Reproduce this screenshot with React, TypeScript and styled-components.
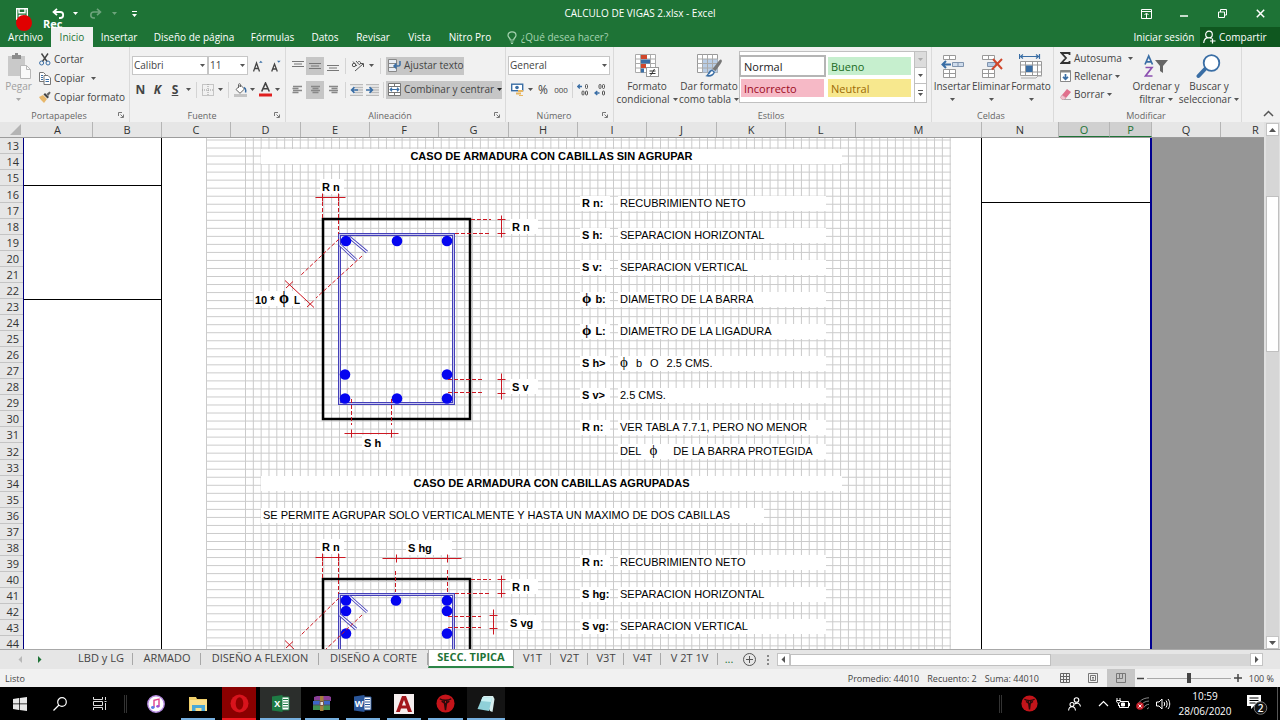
import React from 'react';
import styled, { createGlobalStyle, css } from 'styled-components';

const GREEN = '#1e7336';
const BLUE = '#3a6ea5';
const INK = '#444444';

const GlobalStyle = createGlobalStyle`
  * { box-sizing: border-box; }
  body { margin: 0; background: #000; }
  button, select, input { font: inherit; color: inherit; margin: 0; }
  button { padding: 0; border: 0; background: none; cursor: pointer; }
  svg { display: block; flex: none; }
`;

const Window = styled.div`
  display: flex;
  flex-direction: column;
  height: 100vh;
  overflow: hidden;
  font: 10px/13px 'Open Sans', 'Noto Sans', sans-serif;
  color: ${INK};
  background: #f1f1f1;
`;

/* ---------- title bar and ribbon tabs ---------- */

const Header = styled.header`
  position: relative;
  background: ${GREEN};
  color: #fff;
`;

const TitleBar = styled.div`
  display: grid;
  grid-template-columns: 1fr auto 1fr;
  height: 27px;
  align-items: center;
`;

const QuickAccess = styled.div`
  display: flex;
  align-items: center;
  gap: 8px;
  padding-left: 15px;
`;

const QuickButton = styled.button<{ $w: number; $dim?: boolean }>`
  display: flex;
  justify-content: center;
  width: ${p => p.$w}px;
  opacity: ${p => (p.$dim ? 0.35 : 1)};
`;

const QuickGap = styled.span`
  width: 8px;
`;

const WindowTitle = styled.h1`
  margin: 0;
  font-size: 10px;
  font-weight: 400;
`;

const WindowControls = styled.div`
  display: flex;
  justify-content: flex-end;
  padding-right: 1px;
`;

const WindowButton = styled.button`
  display: flex;
  align-items: center;
  justify-content: center;
  width: 38px;
  height: 26px;
`;

const RecBadge = styled.div`
  position: absolute;
  left: 16px;
  top: 15px;
  display: flex;
  align-items: center;
  gap: 11px;
  height: 16px;
  font-size: 11px;
  font-weight: 700;
  pointer-events: none;
`;

const RecDot = styled.span`
  width: 16px;
  height: 16px;
  border-radius: 50%;
  background: #e00000;
`;

const TabStrip = styled.nav`
  display: flex;
  height: 20px;
`;

const RibbonTab = styled.button<{ $active?: boolean; $w: number }>`
  width: ${p => p.$w}px;
  white-space: nowrap;
  ${p => p.$active && css`
    background: #f1f1f1;
    color: ${GREEN};
  `}
`;

const TellMe = styled.label`
  display: flex;
  align-items: center;
  gap: 4px;
  margin-left: 8px;
`;

const TellMeInput = styled.input`
  width: 120px;
  padding: 0;
  border: 0;
  outline: 0;
  background: none;
  &::placeholder { color: #a6d3b1; opacity: 1; }
`;

const AccountArea = styled.div`
  display: flex;
  margin-left: auto;
`;

const SignIn = styled.button`
  width: 72px;
`;

const Share = styled.button`
  display: flex;
  align-items: center;
  gap: 3px;
  width: 80px;
  padding-left: 3px;
  background: #0f571f;
`;

/* ---------- ribbon ---------- */

const Ribbon = styled.div`
  display: flex;
  height: 75px;
  background: #f1f1f1;
`;

const Group = styled.section<{ $w: number }>`
  display: flex;
  flex-direction: column;
  flex: none;
  width: ${p => p.$w}px;
  border-right: 1px solid #dadada;
`;

const GroupBody = styled.div<{ $pad?: string }>`
  display: flex;
  height: 61px;
  padding: ${p => p.$pad ?? '0'};
`;

const GroupFooter = styled.div`
  display: flex;
  align-items: center;
  height: 14px;
  padding-right: 3px;
  font-size: 9px;
  color: #666;
`;

const GroupName = styled.span`
  flex: 1;
  text-align: center;
`;

const Launcher = styled.button`
  width: 8px;
`;

const Stack = styled.div<{ $gap?: number; $pad?: string }>`
  display: flex;
  flex-direction: column;
  gap: ${p => p.$gap ?? 0}px;
  padding: ${p => p.$pad ?? '0'};
`;

const ToolRow = styled.div`
  display: flex;
  align-items: center;
  height: 19px;
`;

const Tool = styled.button<{ $w: number; $on?: boolean; $small?: boolean }>`
  display: flex;
  align-items: center;
  justify-content: center;
  flex: none;
  width: ${p => p.$w}px;
  height: 18px;
  font-size: ${p => (p.$small ? 8 : 10)}px;
  background: ${p => (p.$on ? '#c6c6c6' : 'none')};
`;

const TextTool = styled.button<{ $w?: number; $on?: boolean }>`
  display: flex;
  align-items: center;
  gap: 3px;
  flex: none;
  width: ${p => (p.$w ? `${p.$w}px` : 'auto')};
  height: 18px;
  padding: 0 2px;
  white-space: nowrap;
  background: ${p => (p.$on ? '#c6c6c6' : 'none')};
`;

const Glyph = styled.span<{ $italic?: boolean; $underline?: boolean; $light?: boolean }>`
  font-size: 12px;
  font-weight: ${p => (p.$light ? 400 : 700)};
  font-style: ${p => (p.$italic ? 'italic' : 'normal')};
  text-decoration: ${p => (p.$underline ? 'underline' : 'none')};
`;

const Rule = styled.span<{ $m?: number }>`
  width: 1px;
  height: 16px;
  margin: 0 ${p => p.$m ?? 3}px;
  background: #d4d4d4;
`;

const BigTool = styled.button<{ $w: number; $dim?: boolean }>`
  display: flex;
  flex-direction: column;
  align-items: center;
  flex: none;
  width: ${p => p.$w}px;
  padding-top: 5px;
  color: ${p => (p.$dim ? '#a0a0a0' : INK)};
  white-space: nowrap;
`;

const BigIcon = styled.span`
  display: flex;
  align-items: center;
  justify-content: center;
  height: 28px;
`;

const LabelLine = styled.span`
  display: flex;
  align-items: center;
  gap: 3px;
  height: 13px;
`;

const SelectBox = styled.label<{ $w: number }>`
  position: relative;
  width: ${p => p.$w}px;
  height: 19px;
  border: 1px solid #c6c6c6;
  background: #fff;
`;

const Select = styled.select`
  appearance: none;
  width: 100%;
  height: 17px;
  padding: 0 1px;
  border: 0;
  outline: 0;
  background: none;
`;

const SelectCaret = styled.span`
  position: absolute;
  right: 2px;
  top: 7px;
  pointer-events: none;
`;

const Gallery = styled.div`
  display: flex;
  width: 188px;
  height: 52px;
  border: 1px solid #c0c0c0;
  background: #fff;
`;

const Swatches = styled.div`
  display: grid;
  flex: 1;
  grid-template-columns: 1fr 1fr;
  gap: 4px;
  padding: 5px 3px 5px 1px;
`;

const Swatch = styled.button<{ $bg: string; $fg: string; $on?: boolean }>`
  padding-left: 3px;
  text-align: left;
  font-size: 11px;
  color: ${p => p.$fg};
  background: ${p => p.$bg};
  outline: ${p => (p.$on ? '2px solid #b5b5b5' : 'none')};
`;

const GalleryScroll = styled.div`
  display: grid;
  width: 12px;
  border-left: 1px solid #c0c0c0;
`;

const GalleryStep = styled.button<{ $dim?: boolean }>`
  display: flex;
  align-items: center;
  justify-content: center;
  border-bottom: 1px solid #c0c0c0;
  background: ${p => (p.$dim ? '#dcdcdc' : '#fff')};
  &:last-child { border-bottom: 0; }
`;

const RibbonEnd = styled.div`
  display: flex;
  flex: 1;
  align-items: flex-end;
  justify-content: flex-end;
  padding: 0 6px 5px;
`;

/* ---------- worksheet ---------- */

const Workbook = styled.main`
  display: flex;
  flex: 1;
  min-height: 0;
`;

const SheetArea = styled.div`
  display: flex;
  flex: 1;
  flex-direction: column;
  min-width: 0;
  overflow: hidden;
`;

const ColumnHeads = styled.div`
  display: flex;
  flex: none;
  height: 16px;
  overflow: hidden;
  background: #e6e6e6;
  border-bottom: 1px solid #9c9c9c;
  font-size: 11px;
  line-height: 15px;
  color: #333;
`;

const Corner = styled.div`
  display: flex;
  align-items: flex-end;
  justify-content: flex-end;
  flex: none;
  width: 23px;
  padding: 0 2px 2px 0;
`;

const ColumnHead = styled.div<{ $w: number; $on?: boolean }>`
  flex: none;
  width: ${p => p.$w}px;
  border-right: 1px solid #b5b5b5;
  text-align: center;
  ${p => p.$on && css`
    background: #d0d0d0;
    color: ${GREEN};
    border-bottom: 1px solid ${GREEN};
  `}
`;

const Body = styled.div`
  display: flex;
  flex: 1;
  min-height: 0;
  overflow: hidden;
  background: #fff;
`;

const RowHeads = styled.div`
  flex: none;
  width: 23px;
  background: #e6e6e6;
  font-size: 11px;
  color: #333;
`;

const RowHead = styled.div<{ $h: number }>`
  display: flex;
  align-items: center;
  justify-content: flex-end;
  height: ${p => p.$h}px;
  padding-right: 4px;
  border-bottom: 1px solid #c4c4c4;
  line-height: 11px;
`;

const LeftCells = styled.div`
  flex: none;
  width: 139px;
  border-left: 1px solid #000080;
  border-right: 1px solid #000;
`;

const CellBlock = styled.div<{ $h: number }>`
  height: ${p => p.$h}px;
  border-bottom: 1px solid #000;
`;

const RightCells = styled.div`
  flex: none;
  width: 171px;
  margin-left: 30px;
  border-left: 1px solid #000;
  border-right: 2px solid #000090;
`;

const OutsidePrint = styled.div`
  flex: 1;
  background: #969696;
`;

const Canvas = styled.article`
  position: relative;
  flex: none;
  width: 745px;
  margin-left: 44px;
  overflow: hidden;
  padding-top: 11px;
  font: 11px/15px 'Liberation Sans', Arial, sans-serif;
  color: #000;
`;

const CanvasGrid = styled.svg`
  position: absolute;
  inset: 0;
`;

const CanvasTitle = styled.h2`
  position: relative;
  width: 581px;
  height: 15px;
  margin: 0 0 0 55px;
  background: #fff;
  font-size: 11px;
  text-align: center;
`;

const CanvasNote = styled.p`
  position: relative;
  width: 503px;
  height: 15px;
  margin: 17px 0 0 55px;
  padding-left: 2px;
  background: #fff;
  white-space: nowrap;
`;

const Case = styled.div`
  position: relative;
  display: flex;
`;

const Legend = styled.dl`
  display: flex;
  flex-direction: column;
  gap: 17px;
  margin: 0;
  padding-top: 32px;
`;

const Entry = styled.div`
  display: flex;
  gap: 8px;
`;

const Key = styled.dt`
  display: flex;
  align-items: baseline;
  gap: 4px;
  width: 30px;
  height: 15px;
  padding-left: 2px;
  background: #fff;
  font-weight: 700;
  white-space: nowrap;
`;

const Meaning = styled.dd`
  display: flex;
  flex-direction: column;
  gap: 9px;
  margin: 0;
`;

const MeaningLine = styled.span<{ $gap?: number }>`
  display: flex;
  align-items: baseline;
  gap: ${p => p.$gap ?? 0}px;
  width: 208px;
  height: 15px;
  padding-left: 2px;
  background: #fff;
  white-space: nowrap;
`;

const Phi = styled.span`
  font-family: 'Liberation Serif', 'DejaVu Serif', serif;
  font-size: 15px;
  line-height: 13px;
`;

/* ---------- scroll bars ---------- */

const VScroll = styled.div`
  display: flex;
  flex: none;
  flex-direction: column;
  align-items: center;
  width: 16px;
  padding-top: 1px;
  background: #e1e1e1;
`;

const ScrollStep = styled.button`
  display: flex;
  align-items: center;
  justify-content: center;
  flex: none;
  width: 13px;
  height: 13px;
  border: 1px solid #c4c4c4;
  background: #fff;
`;

const VTrack = styled.div`
  display: flex;
  flex: 1;
  flex-direction: column;
  width: 13px;
  background: #d6d6d6;
`;

const VThumb = styled.div`
  flex: 31;
  border: 1px solid #c0c0c0;
  background: #fff;
`;

const TrackSpace = styled.div<{ $grow: number }>`
  flex: ${p => p.$grow};
`;

/* ---------- sheet tabs and status bar ---------- */

const SheetBar = styled.div`
  display: flex;
  flex: none;
  height: 20px;
  border-top: 1px solid #a8a8a8;
  background: #e6e6e6;
  font-size: 11px;
`;

const SheetNav = styled.div`
  display: flex;
  align-items: center;
  gap: 12px;
  width: 69px;
  padding-left: 17px;
`;

const SheetTab = styled.button<{ $w: number; $on?: boolean }>`
  position: relative;
  width: ${p => p.$w}px;
  height: 17px;
  padding-bottom: 3px;
  white-space: nowrap;
  ${p => p.$on ? css`
    height: 18px;
    background: #fff;
    color: ${GREEN};
    font-weight: 700;
    border-bottom: 2px solid #2c8547;
    border-left: 1px solid #b0b0b0;
    border-right: 1px solid #b0b0b0;
  ` : css`
    &::after {
      content: '';
      position: absolute;
      right: 0;
      top: 3px;
      width: 1px;
      height: 12px;
      background: #a8a8a8;
    }
  `}
`;

const MoreTabs = styled.button`
  width: 22px;
  padding-bottom: 3px;
  color: ${GREEN};
`;

const IconSlot = styled.button<{ $w: number }>`
  display: flex;
  align-items: center;
  justify-content: center;
  width: ${p => p.$w}px;
`;

const HScroll = styled.div`
  display: flex;
  flex: 1;
  align-items: center;
  margin: 3px 17px 3px 0;
`;

const HTrack = styled.div`
  display: flex;
  flex: 1;
  height: 12px;
  background: #d6d6d6;
`;

const HThumb = styled.div`
  flex: 56;
  border: 1px solid #c0c0c0;
  background: #fff;
`;

const StatusBar = styled.footer`
  display: flex;
  align-items: center;
  flex: none;
  height: 18px;
  padding: 0 6px 0 5px;
  background: #f1f1f1;
  font-size: 9px;
`;

const Totals = styled.div`
  display: flex;
  gap: 8px;
  margin-left: auto;
  margin-right: 12px;
`;

const ViewButton = styled.button<{ $on?: boolean }>`
  display: flex;
  align-items: center;
  justify-content: center;
  width: 28px;
  height: 18px;
  background: ${p => (p.$on ? '#c6c6c6' : 'none')};
`;

const ZoomRange = styled.input`
  appearance: none;
  width: 84px;
  height: 12px;
  margin: 0 2px;
  background: linear-gradient(#a8a8a8, #a8a8a8) center / 100% 1px no-repeat;
  &::-webkit-slider-thumb {
    appearance: none;
    width: 4px;
    height: 10px;
    background: #444;
  }
`;

const ZoomValue = styled.span`
  width: 31px;
  text-align: right;
  white-space: nowrap;
`;

/* ---------- taskbar ---------- */

const Taskbar = styled.div`
  display: flex;
  flex: none;
  height: 33px;
  background: #000;
  color: #fff;
`;

const Task = styled.button<{ $w: number; $bg?: string; $line?: string; $gap?: number }>`
  display: flex;
  align-items: center;
  justify-content: center;
  flex: none;
  width: ${p => p.$w}px;
  margin-right: ${p => p.$gap ?? 0}px;
  padding-top: 2px;
  border-bottom: 2px solid ${p => p.$line ?? 'transparent'};
  background: ${p => p.$bg ?? 'none'};
`;

const TaskRule = styled.span<{ $right: number }>`
  width: 3px;
  height: 18px;
  margin: 8px ${p => p.$right}px 0 4px;
  border: solid #333;
  border-width: 0 1px;
`;

const Tray = styled.div`
  display: flex;
  margin-left: auto;
`;

const Clock = styled.time`
  display: flex;
  flex-direction: column;
  justify-content: center;
  width: 64px;
  padding-top: 1px;
  line-height: 15px;
  text-align: center;
`;

const DesktopEdge = styled.span`
  width: 3px;
  border-left: 1px solid #555;
`;

/* ---------- small icons ---------- */

const Caret = ({ c = '#555' }: { c?: string }) => (
  <svg width="5" height="3" viewBox="0 0 5 3"><path d="M0 0h5L2.5 3z" fill={c} /></svg>
);

const Arrow = ({ dir, c = '#555' }: { dir: 'up' | 'down' | 'left' | 'right'; c?: string }) => {
  const d = { up: 'M0 6 3.5 2 7 6z', down: 'M0 2h7L3.5 6z', left: 'M5 0v7L1.5 3.5z', right: 'M2 0v7l3.5-3.5z' }[dir];
  return <svg width="7" height="7" viewBox="0 0 7 7"><path d={d} fill={c} /></svg>;
};

const LauncherIcon = () => (
  <svg width="6" height="6" viewBox="0 0 6 6" fill="none" stroke="#777"><path d="M.5 4V.5H4M2.5 2.5l2.5 2.5M5.5 2.5v3h-3" /></svg>
);

const SaveIcon = () => (
  <svg width="12" height="12" viewBox="0 0 12 12"><path d="M.7.7h10.6v10.6H.7zM3 .7v4h6v-4M3.3 11V7.5h5.4V11" fill="none" stroke="#fff" strokeWidth="1.4" /></svg>
);

const UndoIcon = () => (
  <svg width="13" height="11" viewBox="0 0 13 11" fill="none" stroke="#fff" strokeWidth="1.8"><path d="M5 .8 1.5 4 5 7.2M2 4h6.2a3 3 0 0 1 0 6H7" /></svg>
);

const RedoIcon = () => (
  <svg width="13" height="11" viewBox="0 0 13 11" fill="none" stroke="#fff" strokeWidth="1.6"><path d="M8 .8 11.5 4 8 7.2M11 4H4.8a3 3 0 0 0 0 6H6" /></svg>
);

const CutIcon = () => (
  <svg width="12" height="13" viewBox="0 0 12 13" fill="none"><path d="M2.5.5 8 8.5M9 .5 3.500 8.500" stroke="#444" strokeWidth="1.4" /><circle cx="2.600" cy="10" r="2" stroke={BLUE} /><circle cx="9" cy="10" r="2" stroke={BLUE} /></svg>
);

const CopyIcon = () => (
  <svg width="12" height="13" viewBox="0 0 12 13" fill="#fff" stroke="#777"><path d="M.5.5h4l2 2v7h-6z" /><path d="M5 3.5h4l2.5 2.5v6.5H5z" /><path d="M2 3.5h2M2 5.5h2M2 7.5h2M6.500 7.500h3.500M6.500 9.500h3.500" stroke={BLUE} /></svg>
);

const BrushIcon = () => (
  <svg width="12" height="12" viewBox="0 0 12 12"><path d="M0 6l4-2 4 4-3 4C3 10 1.5 8.5 0 6z" fill="#e7b76b" /><path d="M4.500 3.500 6 2l4 4-1.500 1.500z" fill="#444" /><path d="M7.500 3 10.500.5l1.200 1.200L9.200 5z" fill="#666" /></svg>
);

const PasteIcon = () => (
  <svg width="24" height="26" viewBox="0 0 24 26"><rect x="1" y="3" width="17" height="20" fill="#c9c9c9" /><rect x="5" y="2" width="9" height="4" fill="#8c8c8c" /><rect x="8" y="0" width="3" height="3" fill="#8c8c8c" /><path d="M13.500 12.500h6l4 4v9h-10z" fill="#fafafa" stroke="#b8b8b8" /><path d="M19.500 12.500v4h4" fill="none" stroke="#b8b8b8" /></svg>
);

const GrowFont = ({ down }: { down?: boolean }) => (
  <svg width="10" height="12" viewBox="0 0 10 12" fill="none"><path d={down ? 'M.7 11.500 3.500 4l2.800 7.500M1.600 9h3.800' : 'M.5 11.500 3.500 3l3 8.500M1.500 8.500h4'} stroke="#444" strokeWidth="1.3" /><path d={down ? 'M6 .8h3.600L7.800 2.800z' : 'M6 2.800h3.600L7.800.8z'} fill={BLUE} /></svg>
);

const BorderIcon = () => (
  <svg width="12" height="12" viewBox="0 0 12 12" fill="none" stroke="#999"><path d="M.5.5h11v11H.5zM6 0v12M0 6h12" strokeDasharray="1 1" /></svg>
);

const BucketIcon = () => (
  <svg width="13" height="14" viewBox="0 0 13 14" fill="none"><path d="M2 6.500 6.500 2l4 4L6 10.300z" fill="#fff" stroke="#666" /><path d="M4.500 5V1.500c0-1 2-1 2 0V4" stroke="#666" /><path d="M10 4.500c2 1 2 3 1.500 5" stroke={BLUE} strokeWidth="1.5" /><path d="M0 12.500h13" stroke="#c4c4c4" strokeWidth="3" /></svg>
);

const FontColorIcon = () => (
  <svg width="13" height="15" viewBox="0 0 13 15" fill="none"><path d="M2.700 9.500 6.500 1l3.800 8.500M4 6.800h5" stroke="#444" strokeWidth="1.6" /><path d="M0 13h13" stroke="#e02020" strokeWidth="3" /></svg>
);

const VAlign = ({ y, n }: { y: number; n: number }) => (
  <svg width="12" height="12" viewBox="0 0 12 12" stroke="#777">
    {Array.from({ length: n }, (_, i) => <path key={i} d={`M${i % 2 ? 2 : 0} ${y + i * 2.5 + 0.5}h${i % 2 ? 8 : 12}`} />)}
  </svg>
);

const HAlign = ({ side }: { side: 'left' | 'center' | 'right' }) => {
  const x = { left: 0, center: 2, right: 3 }[side];
  return <svg width="11" height="10" viewBox="0 0 11 10" stroke="#888" strokeWidth="1.3"><path d={`M1 1.5h9M${x + 0.5} 3.5h6M1 5.5h9M${x + 0.5} 7.5h6`} /></svg>;
};

const OrientIcon = () => (
  <svg width="14" height="12" viewBox="0 0 14 12" fill="none" stroke="#555"><path d="M4 11 12 4M12.500 7V3.500H9" /><circle cx="3" cy="5" r="1.700" /><path d="M2 1.500 6 6M5 1l3 3.500a1.500 1.500 0 1 0-1-2.500" /></svg>
);

const IndentIcon = ({ out }: { out?: boolean }) => (
  <svg width="13" height="12" viewBox="0 0 13 12" fill="none"><path d="M0 .5h13M5 3.500h8M5 6h8M5 8.500h8M0 11.500h13" stroke="#bbb" strokeWidth="1.5" /><path d={out ? 'M8 6H2M4.500 3.200 1.700 6l2.800 2.800' : 'M0 6h6M3.500 3.200 6.300 6 3.500 8.800'} stroke={BLUE} strokeWidth="1.7" /></svg>
);

const WrapIcon = () => (
  <svg width="13" height="13" viewBox="0 0 13 13" fill="none"><path d="M.5.5h8v12h-8zM.5 4.500h8M.5 8.500h8" fill="#e9eef5" stroke="#888" /><path d="M12 2v4c0 1-1 1-2 1H6.500M8.500 4.500 6 7l2.500 2.500" stroke={BLUE} strokeWidth="1.5" /></svg>
);

const MergeIcon = () => (
  <svg width="13" height="13" viewBox="0 0 13 13" fill="none"><path d="M.5.5h12v12H.5zM.5 3.500h12M.5 9.500h12M6.500.5v3M6.500 9.500v3" fill="#fff" stroke="#777" /><path d="M2 6.500h9M4 4.800 2.200 6.500 4 8.200M9 4.800l1.800 1.700L9 8.200" stroke={BLUE} strokeWidth="1.2" /></svg>
);

const MoneyIcon = () => (
  <svg width="13" height="13" viewBox="0 0 13 13"><rect x=".7" y="1.200" width="11" height="6.500" fill="#fff" stroke={BLUE} strokeWidth="1.4" /><circle cx="6" cy="4.500" r="1.800" fill={BLUE} /><path d="M7 7h5v2H7zM5 9.500h5v2H5zM8 12h4v1H8z" fill="#e8b660" /></svg>
);

const DecimalIcon = ({ less }: { less?: boolean }) => (
  <svg width="12" height="12" viewBox="0 0 12 12" fill="none"><path d={less ? 'M1 9h4.500M3.300 7 1 9l2.300 2' : 'M.5 2.500H5M2.800.5.7 2.500l2.100 2'} stroke={BLUE} strokeWidth="1.4" /><g stroke="#555"><rect x="8.500" y=".5" width="2" height="4" rx="1" /><rect x="8.500" y="7" width="2" height="4" rx="1" />{less ? <rect x="5" y=".5" width="2" height="4" rx="1" /> : <rect x="5" y="7" width="2" height="4" rx="1" />}</g></svg>
);

const CondIcon = () => (
  <svg width="26" height="24" viewBox="0 0 26 24"><path d="M1.500.5h20v18h-20zM1.500 5h20M1.500 9.500h20M1.500 14h20M6.500.5v18M16.500.5v18" fill="#fff" stroke="#aaa" /><path d="M7 1h6v4H7zM7 10h5v4H7z" fill="#d0472c" /><path d="M7 5.500h9V9.500H7zM7 14.500h3v4H7z" fill={BLUE} /><rect x="12.500" y="13.500" width="12" height="9" fill="#fff" stroke="#999" /><path d="M15.500 17h6M15.500 19.500h6M20.500 15l-4 6.500" stroke="#333" /></svg>
);

const TableIcon = () => (
  <svg width="27" height="24" viewBox="0 0 27 24"><path d="M1.500.5h20v18h-20z" fill="#fff" stroke="#999" /><path d="M6.500 5h15v13.500h-15z" fill="#b9cde5" /><path d="M1.500 5h20M1.500 9.500h20M1.500 14h20M6.500.5v18M11.500.5v18M16.500.5v18" stroke="#aaa" fill="none" /><path d="M25.500 6c1 1 0 2-1 4l-5 7-3-2 5.500-7c1.500-2 2.500-3 3.500-2z" fill="#777" /><path d="M9 22c3 0 3-6 7-6.500l3 2.500c-1 4-5 6-10 4z" fill={BLUE} /><path d="M12 21c2-.5 2-3 4-4l1.500 1.500c-1 1.500-3 3-5.500 2.500z" fill="#fff" /></svg>
);

const CellsIcon = ({ kind }: { kind: 'insert' | 'delete' }) => (
  <svg width="26" height="24" viewBox="0 0 26 24" fill="#fff"><path d="M4.500 1.500h12v4h-12zM10.500 1.500v4M4.500 15.500h12v8h-12zM10.500 15.500v8M4.500 19.500h12" stroke="#999" />{kind === 'insert' ? <><path d="M13.500 8.500h11v4h-11zM19 8.500v4" fill="#cfdcec" stroke="#7f93ad" /><path d="M12 10.500H3.500M7 7l-3.500 3.500L7 14" fill="none" stroke={BLUE} strokeWidth="2" /></> : <><path d="M9.500 8.500h8v4h-8z" fill="#b9cde5" stroke="#7f93ad" /><path d="m15 5 9 10M24 5l-10 10.500" stroke="#d0472c" strokeWidth="2" /></>}</svg>
);

const FormatIcon = () => (
  <svg width="24" height="25" viewBox="0 0 24 25" fill="none"><path d="M1 2.500h19M4 .5 1.500 2.500 4 4.500M17 .5l2.500 2L17 4.500M.5 0v5M20.500 0v5" stroke={BLUE} strokeWidth="1.2" /><path d="M1.500 7.500h21v14h-21zM1.500 11h21M1.500 18h21M6.500 7.500v14M13.500 7.500v14M18.500 7.500v14" fill="#fff" stroke="#999" /><path d="M7 11.500h6.500V18H7z" fill={BLUE} /><path d="M2 24h15l2-2h4" stroke="#aaa" /></svg>
);

const SumIcon = () => (
  <svg width="11" height="12" viewBox="0 0 11 12" fill="none" stroke="#333" strokeWidth="1.8"><path d="M9.500 3V1H1.500l4.500 5-4.500 5h8V9" /></svg>
);

const FillIcon = () => (
  <svg width="11" height="12" viewBox="0 0 11 12" fill="none"><path d="M.5.5h10v11H.5z" fill="#fff" stroke="#888" /><path d="M.5 1.500h10" stroke="#888" strokeWidth="2" /><path d="M5.500 4v5M3 6.800 5.500 9.300 8 6.800" stroke={BLUE} strokeWidth="1.7" /></svg>
);

const EraserIcon = () => (
  <svg width="11" height="12" viewBox="0 0 11 12"><path d="M7 1l4 3-5 6-4-3z" fill="#e0708c" /><path d="M2 7l4 3-1.500 1.500H2L.5 9.500z" fill="#f3c3cf" stroke="#c98a99" strokeWidth=".6" /><path d="M4 11.500h7" stroke="#aaa" /></svg>
);

const SortIcon = () => (
  <svg width="24" height="24" viewBox="0 0 24 24" fill="none"><path d="M1 10.500 4.700 2l3.800 8.500M2.300 7.800h5" stroke={BLUE} strokeWidth="1.7" /><path d="M1.500 13.500h6.500L1.500 22H8.500" stroke="#8b4fb0" strokeWidth="1.7" /><path d="M11 6h13l-5 6v7l-3-2v-5z" fill="#666" /></svg>
);

const FindIcon = () => (
  <svg width="26" height="25" viewBox="0 0 26 25" fill="none"><path d="M10 14 2.500 22" stroke={BLUE} strokeWidth="4" strokeLinecap="round" /><circle cx="15.500" cy="9" r="7.800" fill="#fff" stroke={BLUE} strokeWidth="1.8" /></svg>
);

const BulbIcon = () => (
  <svg width="10" height="13" viewBox="0 0 10 13" fill="none" stroke="#a6d3b1" strokeWidth="1.2"><path d="M3.300 9C3.300 7 1 6.500 1 4.300 1 2.300 2.700.8 5 .8s4 1.500 4 3.500C9 6.500 6.700 7 6.700 9zM3.500 11h3M4 12.500h2" /></svg>
);

const PersonPlus = () => (
  <svg width="13" height="14" viewBox="0 0 13 14" fill="none" stroke="#fff" strokeWidth="1.2"><circle cx="6" cy="4.500" r="3.300" /><path d="M.7 13c.3-3 2-5 4-5.300M7.500 8l1 .8M9.500 8.500v5M7 11h5.500" /></svg>
);

const GridViewIcon = () => (
  <svg width="10" height="10" viewBox="0 0 10 10" fill="none" stroke="#666"><path d="M.5.5h9v9h-9zM3.500.5v9M6.500.5v9M.5 3.500h9M.5 6.500h9" /></svg>
);
const PageViewIcon = () => (
  <svg width="10" height="10" viewBox="0 0 10 10" fill="none" stroke="#777"><path d="M.5.5h9v9h-9zM2.500 2.500h5v5h-5zM4 4.500h2M4 6h2" /></svg>
);
const BreakViewIcon = () => (
  <svg width="10" height="10" viewBox="0 0 10 10" fill="none" stroke="#777"><path d="M.5.5h9v9h-9zM3.500.5v5h3v-5M.5 5.500h3" /></svg>
);

/* ---------- taskbar icons ---------- */

const WindowsLogo = () => (
  <svg width="14" height="14" viewBox="0 0 14 14" fill="#e8e8e8"><path d="M0 2l6-1v5.600H0zM6.700.9 14 0v6.600H6.700zM0 7.300h6V13l-6-1zM6.700 7.300H14V14l-7.300-1z" /></svg>
);
const SearchGlyph = () => (
  <svg width="14" height="14" viewBox="0 0 14 14" fill="none" stroke="#fff" strokeWidth="1.2"><circle cx="9" cy="5" r="4.300" /><path d="M6 8 .5 13.500" /></svg>
);
const TaskViewIcon = () => (
  <svg width="14" height="13" viewBox="0 0 14 13" fill="none" stroke="#ddd"><path d="M.5 0v2.500h9V0M.5 4.500h9v4h-9zM.5 13v-2.500h9V13M12.500 0v3M12.500 6v7M11.500 4.500h2" /></svg>
);
const MusicIcon = () => (
  <svg width="18" height="18" viewBox="0 0 18 18"><circle cx="9" cy="9" r="8.200" fill="#fff" stroke="#b58be0" strokeWidth="1.4" /><path d="M7 12.500V5.300l5-1.200v7" fill="none" stroke="#e0408c" strokeWidth="1.4" /><ellipse cx="5.800" cy="12.500" rx="1.800" ry="1.400" fill="#5a7be8" /><ellipse cx="10.900" cy="11.300" rx="1.700" ry="1.400" fill="#a04fd8" /></svg>
);
const FolderIcon = () => (
  <svg width="19" height="16" viewBox="0 0 19 16"><path d="M0 1h7l1 2h10v12H0z" fill="#f0cf6a" /><path d="M1 4h17v11H1z" fill="#fbe08e" /><path d="M3 15V9h13v6h-3.500v-3h-6v3z" fill="#4aa8d8" /></svg>
);
const OperaIcon = () => (
  <svg width="19" height="19" viewBox="0 0 19 19"><circle cx="9.500" cy="9.500" r="9" fill="#d8131c" /><ellipse cx="9.500" cy="9.500" rx="3.800" ry="6.200" fill="#8c0000" /></svg>
);
const OfficeIcon = ({ letter, c }: { letter: string; c: string }) => (
  <svg width="18" height="17" viewBox="0 0 18 17"><path d="M9 2h8v13H9z" fill="#fff" stroke={c} /><path d="M11 4.500h5M11 7h5M11 9.500h5M11 12h5" stroke={c} /><path d="M0 1.500 10.500 0v17L0 15.500z" fill={c} /><text x="5.200" y="12" textAnchor="middle" fontFamily="Open Sans, sans-serif" fontSize="9" fontWeight="700" fill="#fff">{letter}</text></svg>
);
const RarIcon = () => (
  <svg width="18" height="15" viewBox="0 0 18 15"><path d="M1 1 4 0h12l2 1v4H1z" fill="#8a3f96" /><path d="M0 5h17v4H0z" fill="#3c66c8" /><path d="M0 9h17v5H0z" fill="#3f9150" /><path d="M1 4.500h16M0 9h17" stroke="#555" /><path d="M7 0h3.500v15H7z" fill="#a5803f" /><path d="M7 5.500h3.500v4H7z" fill="#ddd" stroke="#754" /></svg>
);
const CadIcon = () => (
  <svg width="20" height="20" viewBox="0 0 20 20"><rect width="20" height="20" fill="#f5eeee" /><path d="M2 18 8 2h4l6 16h-4l-1.200-3.500H7L5.800 18zM8 11.500h4L10 6z" fill="#a3161c" /></svg>
);
const RedDisc = ({ s = 19 }: { s?: number }) => (
  <svg width={s} height={s} viewBox="0 0 20 20"><circle cx="10" cy="10" r="9.500" fill="#c4141a" /><path d="M4 5c2 1.500 4 1.500 6 1.500S14 6.500 16 5M8.500 6.500 10 17l1.500-10.500M6 7.500l4 3 4-3" fill="none" stroke="#2b0a0a" strokeWidth="1.5" /></svg>
);
const NoteIcon = () => (
  <svg width="18" height="18" viewBox="0 0 18 18"><path d="M6 1h10l1.500 3-2 13L13 16z" fill="#d8eeee" /><path d="M5.500 2 15 3l-3 13-11.500-2z" fill="#8fd0d8" /><path d="M5.500 2 15 3l-1 4-10-1z" fill="#c9f0f2" /></svg>
);
const PeopleIcon = () => (
  <svg width="13" height="14" viewBox="0 0 13 14" fill="none" stroke="#fff" strokeWidth="1.1"><circle cx="8.500" cy="3" r="2.300" /><path d="M6.500 7c3-2 5.500-.5 6 2.500" /><circle cx="4" cy="7.500" r="2" /><path d="M.6 13.500c.3-5 6.500-5 6.900 0" /></svg>
);
const ChevronUp = ({ c, w = 1.2 }: { c: string; w?: number }) => (
  <svg width="11" height="7" viewBox="0 0 11 7" fill="none" stroke={c} strokeWidth={w}><path d="M1 6l4.500-4.500L10 6" /></svg>
);
const BatteryIcon = () => (
  <svg width="14" height="11" viewBox="0 0 14 11" fill="none" stroke="#fff"><path d="M4 3.500h8.500v6H3.500V7M13.500 5v3" /><path d="M5.500 5h3v3h-3z" fill="#fff" /><path d="M1 0v2M4 0v2M.5 2.500h4c0 2-1 2.500-2 2.500s-2-.5-2-2.500zM2.500 5v3" /></svg>
);
const WifiIcon = () => (
  <svg width="14" height="13" viewBox="0 0 14 13" fill="none"><path d="M2 8C3 4 7 1 13 .8M5 9c1-3 4-4.800 8-5M8 10.500c1-2 2.500-3 5-3.200M11 12l2-1.500" stroke="#888" /><circle cx="4" cy="9" r="3.800" fill="#c8202a" /><path d="M2.500 7.500l3 3M5.500 7.500l-3 3" stroke="#fff" /></svg>
);
const SpeakerIcon = () => (
  <svg width="15" height="12" viewBox="0 0 15 12" fill="none" stroke="#fff"><path d="M.5 4h2.500L6 1v10L3 8H.5zM8 4c.8 1 .8 3 0 4M10 2.500c1.500 2 1.500 5 0 7M12 1c2.300 3 2.300 7 0 10" /></svg>
);
const NoticeIcon = () => (
  <svg width="22" height="22" viewBox="0 0 22 22"><path d="M1 2h14v11H8l-3 3v-3H1z" fill="#fff" /><path d="M3.500 5h9M3.500 7.500h9M3.500 10h6" stroke="#000" /><circle cx="14.500" cy="15" r="6.300" fill="#111" stroke="#777" /><text x="14.500" y="18.500" textAnchor="middle" fontFamily="Open Sans, sans-serif" fontSize="10" fontWeight="600" fill="#fff">2</text></svg>
);

/* ---------- beam section drawings ---------- */

const RED = '#cc1822';

const Mark = ({ x, y, w, children }: { x: number; y: number; w: number; children: string }) => (
  <g>
    <rect x={x - 2} y={y - 12} width={w} height="15" fill="#fff" />
    <text x={x} y={y} fontSize="11" fontWeight="700">{children}</text>
  </g>
);

const Bar = ({ x, y }: { x: number; y: number }) => <circle cx={x} cy={y} r="5.3" fill="#0505f0" />;

const DimH = ({ y, x1, x2, over = 7 }: { y: number; x1: number; x2: number; over?: number }) => (
  <path d={`M${x1 - over} ${y}H${x2 + over}M${x1} ${y - 4}v8M${x2} ${y - 4}v8`} stroke={RED} />
);

const DimV = ({ x, y1, y2, over = 4 }: { x: number; y1: number; y2: number; over?: number }) => (
  <path d={`M${x} ${y1 - over}V${y2 + over}M${x - 4} ${y1}h8M${x - 4} ${y2}h8`} stroke={RED} />
);

const Dashes = ({ d }: { d: string }) => <path d={d} stroke={RED} strokeDasharray="4 2" fill="none" />;

const Hook = ({ d }: { d: string }) => (
  <g fill="none">
    <path d={d} stroke="#4440b8" strokeWidth="3" />
    <path d={d} stroke="#fff" strokeWidth="1.2" />
  </g>
);

const Stirrup = ({ y, h }: { y: number; h: number }) => (
  <g fill="none">
    <rect x="323" y={y} width="147" height={h} stroke="#000" strokeWidth="2.5" />
    <rect x="339.5" y={y + 15.5} width="114" height={h - 31} stroke="#4440b8" strokeWidth="3" />
    <rect x="339.5" y={y + 15.5} width="114" height={h - 31} stroke="#c8c6ee" strokeWidth="1" />
  </g>
);

const SectionSingle = () => (
  <svg width="374" height="312" viewBox="206 164 374 312" fontFamily="Liberation Sans, Arial, sans-serif" fontSize="11" fill="#000">
    <Mark x={322} y={191} w={24}>R n</Mark>
    <Mark x={512} y={231} w={28}>R n</Mark>
    <Mark x={512} y={391} w={28}>S v</Mark>
    <Mark x={364} y={447} w={28}>S h</Mark>
    <rect x="254" y="291" width="50" height="15" fill="#fff" />
    <text x="255" y="304" fontWeight="700">10 *</text>
    <text x="279" y="303" fontFamily="Liberation Serif, DejaVu Serif, serif" fontSize="16" fontWeight="700">ϕ</text>
    <text x="294" y="304" fontSize="10" fontWeight="700">L</text>
    <Stirrup y={219} h={200} />
    <Hook d="M349 237 367 252" />
    <Hook d="M340 245 356 260" />
    {[[346, 241], [397, 241], [447, 241], [345, 374.5], [447, 374.5], [345, 398.5], [397, 398.5], [447, 398.5]].map(([x, y]) => <Bar key={`${x}-${y}`} x={x} y={y} />)}
    <DimH y={197.5} x1={322.5} x2={338.5} />
    <Dashes d="M322.5 202V219M338.5 202V234" />
    <DimV x={501.5} y1={219.5} y2={233.5} />
    <Dashes d="M471 219.5H491M455 233.5H491" />
    <DimV x={501.5} y1={379.5} y2={393.5} over={6} />
    <Dashes d="M448 379.5H482M448 392.5H482" />
    <DimH y={433.5} x1={351.5} x2={391.5} />
    <Dashes d="M351.5 399V425M391.5 399V425" />
    <Dashes d="M339 239 300 276M362 256 316 298" />
    <path d="M285 280.5 314 307.5M286 288l7-6.5M307 307l6.5-6" stroke={RED} />
  </svg>
);

const SectionGrouped = () => (
  <svg width="374" height="130" viewBox="206 523 374 130" fontFamily="Liberation Sans, Arial, sans-serif" fontSize="11" fill="#000">
    <Mark x={322} y={551} w={24}>R n</Mark>
    <Mark x={408} y={552} w={46}>S hg</Mark>
    <Mark x={512} y={591} w={28}>R n</Mark>
    <Mark x={510} y={627} w={33}>S vg</Mark>
    <Stirrup y={579} h={200} />
    <Hook d="M349 596 367 612" />
    <Hook d="M340 615 356 629" />
    {[[346, 600.5], [396, 600.5], [447, 600.5], [346, 611], [447, 611], [346, 633.5], [447, 633.5]].map(([x, y]) => <Bar key={`${x}-${y}`} x={x} y={y} />)}
    <DimH y={557.5} x1={322.5} x2={338.5} />
    <Dashes d="M322.5 562V579M338.5 562V594" />
    <DimH y={558.5} x1={396.5} x2={447.5} over={14} />
    <Dashes d="M395.5 571V592M447.5 570V594" />
    <DimV x={501.5} y1={579.5} y2={593.5} />
    <Dashes d="M471 579.5H491M455 593.5H491" />
    <DimV x={493.5} y1={615.5} y2={628.5} over={6} />
    <Dashes d="M448 616.5H481M448 627.5H481" />
    <Dashes d="M339 598 300 636M362 615 325 650" />
    <path d="M285 640.5 296 651M286 648l7-6.5" stroke={RED} />
  </svg>
);

const gridX = [0.5, ...Array.from({ length: 91 }, (_, i) => 39.5 + i * 7.83)];
const gridY = Array.from({ length: 140 }, (_, i) => 2 + i * 8.03);

const Squares = () => (
  <CanvasGrid width="745" height="1120" fill="none" stroke="#cbcbcb">
    <path d={gridX.map(x => `M${x} 0V1120`).join('')} />
    <path d={gridY.map(y => `M0 ${y}H745`).join('')} />
  </CanvasGrid>
);

/* ---------- data ---------- */

const columns: [string, number][] = [
  ['A', 70], ['B', 69], ['C', 69], ['D', 70], ['E', 69], ['F', 69], ['G', 70], ['H', 69], ['I', 69],
  ['J', 70], ['K', 69], ['L', 70], ['M', 126], ['N', 77], ['O', 51], ['P', 42], ['Q', 69], ['R', 70],
];

const rows = Array.from({ length: 32 }, (_, i) => i + 13);

const ribbonTabs: [string, number][] = [
  ['Archivo', 51], ['Inicio', 42], ['Insertar', 52], ['Diseño de página', 98], ['Fórmulas', 59],
  ['Datos', 46], ['Revisar', 50], ['Vista', 43], ['Nitro Pro', 58],
];

const sheetTabs: [string, number][] = [
  ['LBD y LG', 64], ['ARMADO', 68], ['DISEÑO A FLEXION', 118], ['DISEÑO A CORTE', 109], ['SECC. TIPICA', 86],
  ['V1T', 37], ['V2T', 37], ['V3T', 36], ['V4T', 37], ['V 2T 1V', 57],
];

const RibbonGroup = ({ name, w, launcher, pad, children }: { name: string; w: number; launcher?: boolean; pad?: string; children: React.ReactNode }) => (
  <Group $w={w} aria-label={name}>
    <GroupBody $pad={pad}>{children}</GroupBody>
    <GroupFooter>
      <GroupName>{name}</GroupName>
      {launcher && <Launcher aria-label={`Opciones de ${name}`}><LauncherIcon /></Launcher>}
    </GroupFooter>
  </Group>
);

const Combo = ({ label, value, w }: { label: string; value: string; w: number }) => (
  <SelectBox $w={w}>
    <Select aria-label={label} defaultValue={value}><option>{value}</option></Select>
    <SelectCaret><Caret /></SelectCaret>
  </SelectBox>
);

export default function App() {
  return (
    <Window>
      <GlobalStyle />
      <Header>
        <TitleBar>
          <QuickAccess>
            <QuickButton $w={13} aria-label="Guardar"><SaveIcon /></QuickButton>
            <QuickGap />
            <QuickButton $w={13} aria-label="Deshacer"><UndoIcon /></QuickButton>
            <QuickButton $w={5} aria-label="Lista deshacer"><Caret c="#fff" /></QuickButton>
            <QuickButton $w={18} $dim aria-label="Rehacer"><RedoIcon /></QuickButton>
            <QuickButton $w={5} $dim aria-label="Lista rehacer"><Caret c="#fff" /></QuickButton>
            <QuickButton $w={18} aria-label="Personalizar">
              <svg width="5" height="6" viewBox="0 0 5 6" fill="#fff"><path d="M0 0h5v1H0zM0 3h5L2.500 6z" /></svg>
            </QuickButton>
          </QuickAccess>
          <WindowTitle>CALCULO DE VIGAS 2.xlsx - Excel</WindowTitle>
          <WindowControls>
            <WindowButton aria-label="Opciones de la cinta"><svg width="11" height="10" viewBox="0 0 11 10" fill="none" stroke="#fff"><path d="M.5.5h10v9H.5zM.5 2.500h10M5.500 9V4.500M3.500 6l2-2 2 2" /></svg></WindowButton>
            <WindowButton aria-label="Minimizar"><svg width="8" height="10" viewBox="0 0 8 10" stroke="#fff" strokeWidth="1.5"><path d="M0 7h8" /></svg></WindowButton>
            <WindowButton aria-label="Restaurar"><svg width="9" height="9" viewBox="0 0 9 9" fill="none" stroke="#fff"><path d="M.5 3h6v5.500h-6zM2.500 3V.5h6V6h-2" /></svg></WindowButton>
            <WindowButton aria-label="Cerrar"><svg width="9" height="9" viewBox="0 0 9 9" stroke="#fff" strokeWidth="1.5"><path d="M.8.8l7.400 7.400M8.200.8.8 8.200" /></svg></WindowButton>
          </WindowControls>
        </TitleBar>
        <TabStrip>
          {ribbonTabs.map(([t, w]) => <RibbonTab key={t} $w={w} $active={t === 'Inicio'}>{t}</RibbonTab>)}
          <TellMe><BulbIcon /><TellMeInput aria-label="¿Qué desea hacer?" placeholder="¿Qué desea hacer?" /></TellMe>
          <AccountArea>
            <SignIn>Iniciar sesión</SignIn>
            <Share><PersonPlus />Compartir</Share>
          </AccountArea>
        </TabStrip>
        <RecBadge><RecDot />Rec</RecBadge>
      </Header>

      <Ribbon>
        <RibbonGroup name="Portapapeles" w={130} launcher>
          <BigTool $w={37} $dim><BigIcon><PasteIcon /></BigIcon><LabelLine>Pegar</LabelLine><LabelLine><Caret c="#aaa" /></LabelLine></BigTool>
          <Stack $gap={1} $pad="3px 0 0">
            <TextTool><CutIcon />Cortar</TextTool>
            <TextTool><CopyIcon />Copiar<span /><Caret /></TextTool>
            <TextTool><BrushIcon />Copiar formato</TextTool>
          </Stack>
        </RibbonGroup>

        <RibbonGroup name="Fuente" w={156} launcher pad="9px 0 0 2px">
          <Stack $gap={5}>
            <ToolRow>
              <Combo label="Fuente" value="Calibri" w={76} />
              <Combo label="Tamaño" value="11" w={40} />
              <Tool $w={20} aria-label="Aumentar tamaño"><GrowFont /></Tool>
              <Tool $w={16} aria-label="Reducir tamaño"><GrowFont down /></Tool>
            </ToolRow>
            <ToolRow>
              <Tool $w={17}><Glyph>N</Glyph></Tool>
              <Tool $w={17}><Glyph $italic>K</Glyph></Tool>
              <Tool $w={18}><Glyph $underline>S</Glyph></Tool>
              <Tool $w={9} aria-label="Tipo de subrayado"><Caret /></Tool>
              <Rule />
              <Tool $w={15} aria-label="Bordes"><BorderIcon /></Tool>
              <Tool $w={10} aria-label="Tipos de borde"><Caret /></Tool>
              <Rule />
              <Tool $w={16} aria-label="Color de relleno"><BucketIcon /></Tool>
              <Tool $w={9} aria-label="Colores de relleno"><Caret /></Tool>
              <Tool $w={16} aria-label="Color de fuente"><FontColorIcon /></Tool>
              <Tool $w={9} aria-label="Colores de fuente"><Caret /></Tool>
            </ToolRow>
          </Stack>
        </RibbonGroup>

        <RibbonGroup name="Alineación" w={220} launcher pad="9px 0 0 3px">
          <Stack $gap={5}>
            <ToolRow>
              <Tool $w={17} aria-label="Alinear arriba"><VAlign y={1} n={3} /></Tool>
              <Tool $w={18} $on aria-label="Alinear en el medio"><VAlign y={3} n={3} /></Tool>
              <Tool $w={18} aria-label="Alinear abajo"><VAlign y={5} n={3} /></Tool>
              <Rule />
              <Tool $w={18} aria-label="Orientación"><OrientIcon /></Tool>
              <Tool $w={8} aria-label="Tipos de orientación"><Caret /></Tool>
              <Rule $m={5} />
              <TextTool $w={78} $on><WrapIcon />Ajustar texto</TextTool>
            </ToolRow>
            <ToolRow>
              <Tool $w={17} aria-label="Alinear a la izquierda"><HAlign side="left" /></Tool>
              <Tool $w={18} $on aria-label="Centrar"><HAlign side="center" /></Tool>
              <Tool $w={18} aria-label="Alinear a la derecha"><HAlign side="right" /></Tool>
              <Rule />
              <Tool $w={15} aria-label="Disminuir sangría"><IndentIcon out /></Tool>
              <Tool $w={17} aria-label="Aumentar sangría"><IndentIcon /></Tool>
              <Rule $m={2} />
              <TextTool $w={116} $on><MergeIcon />Combinar y centrar<Caret c="#222" /></TextTool>
            </ToolRow>
          </Stack>
        </RibbonGroup>

        <RibbonGroup name="Número" w={108} launcher pad="9px 0 0 2px">
          <Stack $gap={5}>
            <ToolRow><Combo label="Formato de número" value="General" w={102} /></ToolRow>
            <ToolRow>
              <Tool $w={18} aria-label="Moneda"><MoneyIcon /></Tool>
              <Tool $w={9} aria-label="Tipos de moneda"><Caret /></Tool>
              <Tool $w={16}><Glyph $light>%</Glyph></Tool>
              <Tool $w={20} $small>000</Tool>
              <Rule $m={1} />
              <Tool $w={17} aria-label="Aumentar decimales"><DecimalIcon /></Tool>
              <Tool $w={17} aria-label="Disminuir decimales"><DecimalIcon less /></Tool>
            </ToolRow>
          </Stack>
        </RibbonGroup>

        <RibbonGroup name="Estilos" w={318} pad="0 0 0 1px">
          <BigTool $w={64}><BigIcon><CondIcon /></BigIcon><LabelLine>Formato</LabelLine><LabelLine>condicional <Caret /></LabelLine></BigTool>
          <BigTool $w={60}><BigIcon><TableIcon /></BigIcon><LabelLine>Dar formato</LabelLine><LabelLine>como tabla <Caret /></LabelLine></BigTool>
          <Stack $pad="4px 0 0">
            <Gallery>
              <Swatches>
                <Swatch $bg="#fff" $fg="#222" $on>Normal</Swatch>
                <Swatch $bg="#c6efce" $fg="#1a6b22">Bueno</Swatch>
                <Swatch $bg="#f6b9c6" $fg="#9c0a1c">Incorrecto</Swatch>
                <Swatch $bg="#f7e88e" $fg="#9c6a05">Neutral</Swatch>
              </Swatches>
              <GalleryScroll>
                <GalleryStep $dim aria-label="Subir"><Caret c="#aaa" /></GalleryStep>
                <GalleryStep aria-label="Bajar"><Caret /></GalleryStep>
                <GalleryStep aria-label="Más estilos"><svg width="5" height="6" viewBox="0 0 5 6" fill="#555"><path d="M0 0h5v1H0zM0 3h5L2.500 6z" /></svg></GalleryStep>
              </GalleryScroll>
            </Gallery>
          </Stack>
        </RibbonGroup>

        <RibbonGroup name="Celdas" w={122}>
          <BigTool $w={40}><BigIcon><CellsIcon kind="insert" /></BigIcon><LabelLine>Insertar</LabelLine><LabelLine><Caret /></LabelLine></BigTool>
          <BigTool $w={38}><BigIcon><CellsIcon kind="delete" /></BigIcon><LabelLine>Eliminar</LabelLine><LabelLine><Caret /></LabelLine></BigTool>
          <BigTool $w={42}><BigIcon><FormatIcon /></BigIcon><LabelLine>Formato</LabelLine><LabelLine><Caret /></LabelLine></BigTool>
        </RibbonGroup>

        <RibbonGroup name="Modificar" w={188} pad="0 0 0 4px">
          <Stack $pad="2px 0 0">
            <TextTool $w={74}><SumIcon />Autosuma<span /><Caret /></TextTool>
            <TextTool><FillIcon />Rellenar<Caret /></TextTool>
            <TextTool><EraserIcon />Borrar<Caret /></TextTool>
          </Stack>
          <BigTool $w={48}><BigIcon><SortIcon /></BigIcon><LabelLine>Ordenar y</LabelLine><LabelLine>filtrar <Caret /></LabelLine></BigTool>
          <BigTool $w={58}><BigIcon><FindIcon /></BigIcon><LabelLine>Buscar y</LabelLine><LabelLine>seleccionar <Caret /></LabelLine></BigTool>
        </RibbonGroup>

        <RibbonEnd><button aria-label="Contraer la cinta"><ChevronUp c="#555" w={1.5} /></button></RibbonEnd>
      </Ribbon>

      <Workbook>
        <SheetArea>
          <ColumnHeads>
            <Corner><svg width="11" height="11" viewBox="0 0 11 11"><path d="M11 0v11H0z" fill="#b4b4b4" /></svg></Corner>
            {columns.map(([c, w]) => <ColumnHead key={c} $w={w} $on={c === 'O' || c === 'P'}>{c}</ColumnHead>)}
          </ColumnHeads>
          <Body>
            <RowHeads>{rows.map(r => <RowHead key={r} $h={r % 16 === 0 ? 17 : 16}>{r}</RowHead>)}</RowHeads>
            <LeftCells><CellBlock $h={48} /><CellBlock $h={114} /></LeftCells>
            <Canvas>
              <Squares />
              <CanvasTitle>CASO DE ARMADURA CON CABILLAS SIN AGRUPAR</CanvasTitle>
              <Case>
                <SectionSingle />
                <Legend>
                  <Entry><Key>R n:</Key><Meaning><MeaningLine>RECUBRIMIENTO NETO</MeaningLine></Meaning></Entry>
                  <Entry><Key>S h:</Key><Meaning><MeaningLine>SEPARACION HORIZONTAL</MeaningLine></Meaning></Entry>
                  <Entry><Key>S v:</Key><Meaning><MeaningLine>SEPARACION VERTICAL</MeaningLine></Meaning></Entry>
                  <Entry><Key><Phi>ϕ</Phi><span>b:</span></Key><Meaning><MeaningLine>DIAMETRO DE LA BARRA</MeaningLine></Meaning></Entry>
                  <Entry><Key><Phi>ϕ</Phi><span>L:</span></Key><Meaning><MeaningLine>DIAMETRO DE LA LIGADURA</MeaningLine></Meaning></Entry>
                  <Entry><Key>S h&gt;</Key><Meaning><MeaningLine $gap={8}><Phi>ϕ</Phi><span>b</span><span>O</span><span>2.5 CMS.</span></MeaningLine></Meaning></Entry>
                  <Entry><Key>S v&gt;</Key><Meaning><MeaningLine>2.5 CMS.</MeaningLine></Meaning></Entry>
                  <Entry>
                    <Key>R n:</Key>
                    <Meaning>
                      <MeaningLine>VER TABLA 7.7.1, PERO NO MENOR</MeaningLine>
                      <MeaningLine $gap={8}><span>DEL</span><Phi>ϕ</Phi><span /><span>DE LA BARRA PROTEGIDA</span></MeaningLine>
                    </Meaning>
                  </Entry>
                </Legend>
              </Case>
              <CanvasTitle>CASO DE ARMADURA CON CABILLAS AGRUPADAS</CanvasTitle>
              <CanvasNote>SE PERMITE AGRUPAR SOLO VERTICALMENTE Y HASTA UN MAXIMO DE DOS CABILLAS</CanvasNote>
              <Case>
                <SectionGrouped />
                <Legend>
                  <Entry><Key>R n:</Key><Meaning><MeaningLine>RECUBRIMIENTO NETO</MeaningLine></Meaning></Entry>
                  <Entry><Key>S hg:</Key><Meaning><MeaningLine>SEPARACION HORIZONTAL</MeaningLine></Meaning></Entry>
                  <Entry><Key>S vg:</Key><Meaning><MeaningLine>SEPARACION VERTICAL</MeaningLine></Meaning></Entry>
                </Legend>
              </Case>
            </Canvas>
            <RightCells><CellBlock $h={65} /></RightCells>
            <OutsidePrint />
          </Body>
        </SheetArea>
        <VScroll>
          <ScrollStep aria-label="Subir"><Arrow dir="up" /></ScrollStep>
          <VTrack><TrackSpace $grow={12} /><VThumb /><TrackSpace $grow={57} /></VTrack>
          <ScrollStep aria-label="Bajar"><Arrow dir="down" /></ScrollStep>
        </VScroll>
      </Workbook>

      <SheetBar>
        <SheetNav>
          <button aria-label="Hojas anteriores"><Arrow dir="left" c="#b8b8b8" /></button>
          <button aria-label="Hojas siguientes"><Arrow dir="right" c={GREEN} /></button>
        </SheetNav>
        {sheetTabs.map(([t, w]) => <SheetTab key={t} $w={w} $on={t === 'SECC. TIPICA'}>{t}</SheetTab>)}
        <MoreTabs aria-label="Más hojas">...</MoreTabs>
        <IconSlot $w={18} aria-label="Hoja nueva"><svg width="13" height="13" viewBox="0 0 13 13" fill="none" stroke="#555"><circle cx="6.500" cy="6.500" r="6" /><path d="M6.500 3v7M3 6.500h7" /></svg></IconSlot>
        <IconSlot $w={19} aria-label="Ajustar ancho"><svg width="2" height="10" viewBox="0 0 2 10" fill="#888"><path d="M0 0h2v2H0zM0 4h2v2H0zM0 8h2v2H0z" /></svg></IconSlot>
        <HScroll>
          <ScrollStep aria-label="Izquierda"><Arrow dir="left" /></ScrollStep>
          <HTrack><HThumb /><TrackSpace $grow={43} /></HTrack>
          <ScrollStep aria-label="Derecha"><Arrow dir="right" /></ScrollStep>
        </HScroll>
      </SheetBar>

      <StatusBar>
        <span>Listo</span>
        <Totals><span>Promedio: 44010</span><span>Recuento: 2</span><span>Suma: 44010</span></Totals>
        <ViewButton aria-label="Normal"><GridViewIcon /></ViewButton>
        <ViewButton aria-label="Diseño de página"><PageViewIcon /></ViewButton>
        <ViewButton $on aria-label="Saltos de página"><BreakViewIcon /></ViewButton>
        <IconSlot $w={10} aria-label="Alejar"><svg width="7" height="7" viewBox="0 0 7 7" stroke="#444" strokeWidth="1.5"><path d="M0 3.500h7" /></svg></IconSlot>
        <ZoomRange type="range" aria-label="Zoom" min={0} max={100} defaultValue={50} />
        <IconSlot $w={10} aria-label="Acercar"><svg width="8" height="8" viewBox="0 0 8 8" stroke="#444" strokeWidth="1.5"><path d="M0 4h8M4 0v8" /></svg></IconSlot>
        <ZoomValue>100 %</ZoomValue>
      </StatusBar>

      <Taskbar>
        <Task $w={40} aria-label="Inicio"><WindowsLogo /></Task>
        <Task $w={40} aria-label="Buscar"><SearchGlyph /></Task>
        <Task $w={40} aria-label="Vista de tareas"><TaskViewIcon /></Task>
        <TaskRule $right={8} />
        <Task $w={42} $gap={4} aria-label="Música"><MusicIcon /></Task>
        <Task $w={34} $gap={7} $line="#76b0e0" aria-label="Explorador"><FolderIcon /></Task>
        <Task $w={34} $gap={4} $bg="#8a0000" $line="#f01820" aria-label="Opera"><OperaIcon /></Task>
        <Task $w={41} $gap={4} $bg="#2b2e2c" $line="#76b0e0" aria-label="Excel"><OfficeIcon letter="X" c="#1e7b45" /></Task>
        <Task $w={34} $gap={7} $line="#76b0e0" aria-label="Archivador"><RarIcon /></Task>
        <Task $w={34} $gap={7} $line="#76b0e0" aria-label="Word"><OfficeIcon letter="W" c="#2a5699" /></Task>
        <Task $w={34} $gap={7} $line="#76b0e0" aria-label="Dibujo"><CadIcon /></Task>
        <Task $w={35} $gap={4} $line="#76b0e0" aria-label="Grabador"><RedDisc /></Task>
        <Task $w={38} $bg="#141414" $line="#76b0e0" aria-label="Bloc de notas"><NoteIcon /></Task>
        <Tray>
          <TaskRule $right={15} />
          <Task $w={24} $gap={23} aria-label="Grabador en segundo plano"><RedDisc s={17} /></Task>
          <Task $w={20} $gap={9} aria-label="Contactos"><PeopleIcon /></Task>
          <Task $w={20} aria-label="Iconos ocultos"><ChevronUp c="#fff" /></Task>
          <Task $w={20} aria-label="Batería"><BatteryIcon /></Task>
          <Task $w={20} aria-label="Red"><WifiIcon /></Task>
          <Task $w={20} aria-label="Volumen"><SpeakerIcon /></Task>
          <Clock><span>10:59</span><span>28/06/2020</span></Clock>
          <Task $w={40} aria-label="Notificaciones"><NoticeIcon /></Task>
          <DesktopEdge />
        </Tray>
      </Taskbar>
    </Window>
  );
}
